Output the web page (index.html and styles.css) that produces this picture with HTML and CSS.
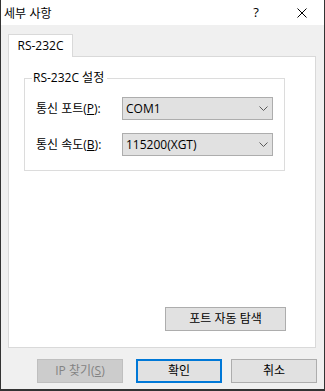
FILE: index.html
```html
<!DOCTYPE html>
<html lang="ko">
<head>
<meta charset="utf-8">
<title>세부 사항</title>
<link rel="stylesheet" href="styles.css">
</head>
<body>
<div class="window">
  <div class="titlebar">
    <div class="title">세부 사항</div>
    <div class="cap-btn help">?</div>
    <div class="cap-btn close">
      <svg width="10" height="10" viewBox="0 0 10 10"><path d="M0.5 0.5 L9.5 9.5 M9.5 0.5 L0.5 9.5" stroke="#000" stroke-width="1" fill="none"/></svg>
    </div>
  </div>
  <div class="client">
    <div class="tabs">
      <div class="tab">RS-232C</div>
    </div>
    <div class="panel">
      <fieldset class="group">
        <legend class="legend">RS-232C 설정</legend>
        <div class="rows">
          <div class="row">
            <div class="label">통신 포트(<u>P</u>):</div>
            <div class="combo">
              <span class="combo-text">COM1</span>
              <svg class="chev" width="9" height="5" viewBox="0 0 9 5"><path d="M0.5 0.5 L4.5 4.5 L8.5 0.5" stroke="#5a5a5a" stroke-width="1" fill="none"/></svg>
            </div>
          </div>
          <div class="row">
            <div class="label">통신 속도(<u>B</u>):</div>
            <div class="combo">
              <span class="combo-text">115200(XGT)</span>
              <svg class="chev" width="9" height="5" viewBox="0 0 9 5"><path d="M0.5 0.5 L4.5 4.5 L8.5 0.5" stroke="#5a5a5a" stroke-width="1" fill="none"/></svg>
            </div>
          </div>
        </div>
      </fieldset>
      <div class="btn auto">포트 자동 탐색</div>
    </div>
    <div class="buttons">
      <div class="btn dlg disabled">IP 찾기(<u>S</u>)</div>
      <div class="btn dlg default">확인</div>
      <div class="btn dlg cancel">취소</div>
    </div>
  </div>
</div>
</body>
</html>
```
FILE: styles.css
```css
html, body {
  margin: 0;
  padding: 0;
  background: #f0f0f0;
}
body {
  font-family: "Open Sans", "Noto Sans CJK KR", sans-serif;
  font-size: 12px;
  color: #000;
}
.window {
  width: 325px;
  height: 391px;
  box-sizing: border-box;
  border-left: 1px solid #333;
  border-right: 1px solid #333;
  border-bottom: 2px solid #333;
  display: flex;
  flex-direction: column;
  background: #f0f0f0;
}
.titlebar {
  height: 25px;
  background: #fff;
  display: flex;
  align-items: center;
  flex-shrink: 0;
}
.title {
  flex: 1;
  padding-left: 3px;
  line-height: 16px;
  font-family: "Noto Sans CJK KR", sans-serif;
}
.cap-btn {
  width: 46px;
  height: 25px;
  display: flex;
  align-items: center;
  justify-content: center;
}
.help {
  font-size: 13px;
  padding-bottom: 1px;
  box-sizing: border-box;
}
.close {
  width: 45px;
}
.client {
  flex: 1;
  padding: 9px 8px 0 7px;
  display: flex;
  flex-direction: column;
}
.tabs {
  display: flex;
}
.tab {
  position: relative;
  z-index: 1;
  width: 63px;
  height: 22px;
  box-sizing: content-box;
  border: 1px solid #d9d9d9;
  border-bottom: none;
  background: #fff;
  margin-bottom: -1px;
  padding-left: 0;
  text-align: center;
  line-height: 20px;
  padding-top: 1px;
  height: 21px;
}
.panel {
  height: 292px;
  box-sizing: border-box;
  border: 1px solid #d9d9d9;
  background: #fff;
  display: flex;
  flex-direction: column;
}
.group {
  margin: 13px 0 0 15px;
  width: 261px;
  box-sizing: border-box;
  border: 1px solid #dcdcdc;
  padding: 0 11px 14px 7px;
  min-inline-size: 0;
}
.legend {
  padding: 0 3px 0 1px;
  line-height: 16px;
}
.rows {
  padding: 11px 0 0 4px;
  display: flex;
  flex-direction: column;
  gap: 13px;
}
.row {
  display: flex;
  align-items: center;
}
.label {
  width: 86px;
  line-height: 16px;
}
.combo {
  width: 151px;
  height: 23px;
  box-sizing: border-box;
  border: 1px solid #adadad;
  background: #e1e1e1;
  display: flex;
  align-items: center;
  padding-left: 3px;
}
.combo-text {
  flex: 1;
  line-height: 16px;
}
.chev {
  margin-right: 4px;
}
.btn {
  box-sizing: border-box;
  border: 1px solid #adadad;
  background: #e1e1e1;
  display: flex;
  align-items: center;
  justify-content: center;
  line-height: 16px;
}
.auto {
  margin-top: auto;
  align-self: flex-end;
  width: 121px;
  height: 24px;
  margin-right: 29px;
  margin-bottom: 16px;
}
.buttons {
  display: flex;
  justify-content: flex-end;
  margin-top: 11px;
  margin-right: -1px;
}
.dlg {
  width: 86px;
  height: 24px;
}
.disabled {
  background: #cccccc;
  border-color: #bfbfbf;
  color: #838383;
}
.default {
  border: 2px solid #0078d7;
  margin-left: 13px;
}
.cancel {
  margin-left: 9px;
}
```
